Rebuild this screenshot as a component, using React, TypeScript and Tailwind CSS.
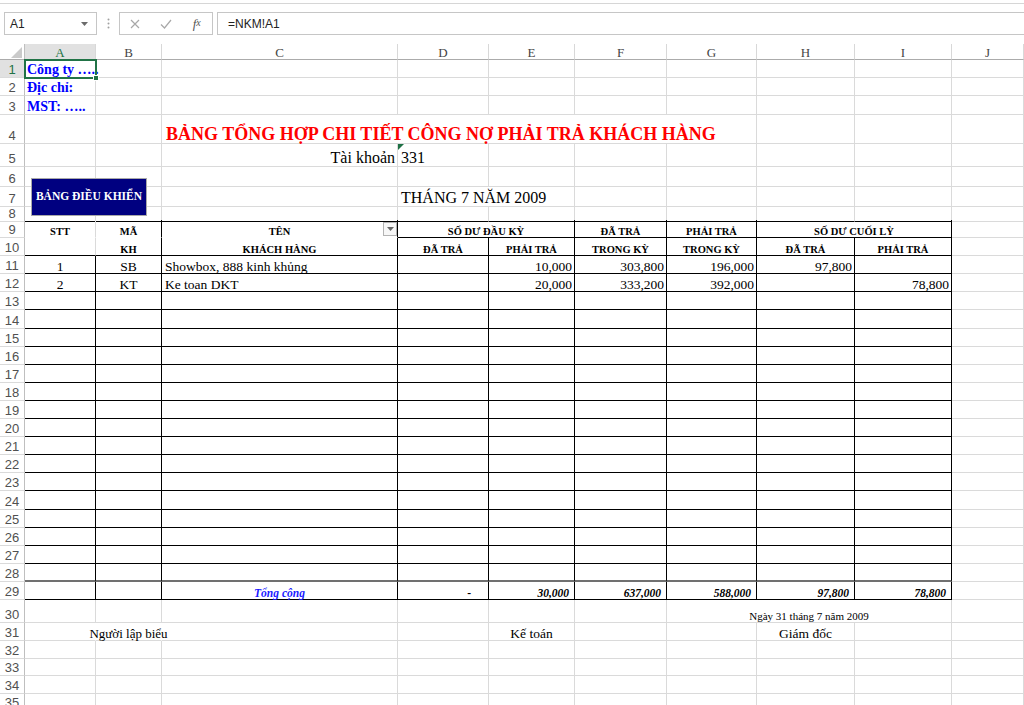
import React from 'react';

const COLS = 'grid grid-cols-[25px_71px_66px_236px_91px_86px_92px_90px_98px_97px_72px]';
const SERIF = "font-['Liberation_Serif','Times_New_Roman',serif]";
const SANS = "font-['Liberation_Sans',Arial,sans-serif]";

type Edge = 'g' | 'k' | 'n' | 't';

const RIGHT: Record<Edge, string> = {
  g: 'border-r-[#dadada]',
  k: 'border-r-black',
  n: 'border-r-transparent',
  t: 'border-r-black',
};

const BOTTOM: Record<Edge, string> = {
  g: 'border-b border-b-[#dadada]',
  k: 'border-b border-b-black',
  n: 'border-b border-b-transparent',
  t: 'border-b-2 border-b-[#707070]',
};

interface CellProps {
  r?: Edge;
  b?: Edge;
  className?: string;
  children?: React.ReactNode;
}

function Cell({ r = 'g', b = 'g', className = '', children }: CellProps) {
  return (
    <div className={`relative flex min-w-0 items-end whitespace-nowrap border-r ${RIGHT[r]} ${BOTTOM[b]} ${className}`}>
      {children}
    </div>
  );
}

const blank = (key: string, n: number, r: Edge = 'g', b: Edge = 'g') =>
  Array.from({ length: n }, (_, i) => <Cell key={key + i} r={r} b={b} />);

function RowHead({ n, active }: { n: number; active?: boolean }) {
  return (
    <div
      className={`flex items-end justify-center border-r border-r-[#bfbfbf] border-b border-b-[#dadada] text-[13px] leading-[14px] ${SANS} ${
        active ? 'bg-[#e1e1e1] text-[#217346]' : 'text-[#505050]'
      }`}
    >
      {n}
    </div>
  );
}

function Row({ n, h, active, children }: { n: number; h: string; active?: boolean; children: React.ReactNode }) {
  return (
    <div className={`${COLS} ${h}`}>
      <RowHead n={n} active={active} />
      {children}
    </div>
  );
}

function FormulaBar() {
  return (
    <div className={`h-[44px] ${SANS}`}>
      <div className="h-[4px] border-b border-[#d6d6d6]" />
      <div className="mt-[8px] flex h-[23px] pl-[4px]">
        <div className="flex w-[93px] items-center justify-between border border-[#c6c6c6] pl-[5px] pr-[8px] text-[12px] text-[#222]">
          <span>A1</span>
          <svg width="7" height="4" viewBox="0 0 7 4">
            <polygon points="0,0 7,0 3.5,4" fill="#6b6b6b" />
          </svg>
        </div>
        <div className="flex w-[22px] items-center justify-center">
          <svg width="3" height="11" viewBox="0 0 3 11">
            <circle cx="1.5" cy="1.5" r="1" fill="#a0a0a0" />
            <circle cx="1.5" cy="5.5" r="1" fill="#a0a0a0" />
            <circle cx="1.5" cy="9.5" r="1" fill="#a0a0a0" />
          </svg>
        </div>
        <div className="flex w-[94px] items-center border border-[#c6c6c6]">
          <span className="flex w-[31px] justify-center">
            <svg width="10" height="10" viewBox="0 0 10 10">
              <path d="M1 1 L9 9 M9 1 L1 9" stroke="#a8a8a8" strokeWidth="1.2" />
            </svg>
          </span>
          <span className="flex w-[31px] justify-center">
            <svg width="12" height="10" viewBox="0 0 12 10">
              <path d="M1 5.5 L4.5 9 L11 1" stroke="#a8a8a8" strokeWidth="1.2" fill="none" />
            </svg>
          </span>
          <span className={`flex w-[31px] justify-center text-[13px] italic text-[#555] ${SERIF}`}>
            f<span className="text-[10px] leading-[18px]">x</span>
          </span>
        </div>
        <div className="ml-[4px] flex flex-1 items-center border border-r-0 border-[#c6c6c6] pl-[10px] text-[12px] text-[#222]">
          =NKM!A1
        </div>
      </div>
    </div>
  );
}

function HeaderRow() {
  const letters = ['A', 'B', 'C', 'D', 'E', 'F', 'G', 'H', 'I', 'J'];
  return (
    <div className={`${COLS} h-[16px]`}>
      <div className="relative border-r border-r-[#bfbfbf] border-b border-b-[#ababab]">
        <svg className="absolute left-0 top-0" width="25" height="16" viewBox="0 0 25 16">
          <polygon points="22,3 22,14 11,14" fill="#cacaca" />
        </svg>
      </div>
      {letters.map((l) => (
        <div
          key={l}
          className={`flex items-end justify-center border-r border-r-[#d8d8d8] border-b border-b-[#ababab] text-[13px] leading-[12px] ${
            l === 'A' ? 'bg-[#e1e1e1] text-[#217346]' : 'text-[#444]'
          }`}
        >
          {l}
        </div>
      ))}
    </div>
  );
}

const TH = 'justify-center text-[10.5px] font-bold leading-[11px]';
const TXT = 'text-[13.5px] leading-[13px]';
const NUM = 'justify-end pr-[2px] text-[13.5px] leading-[13px]';
const TOT = 'justify-end pr-[5px] text-[11.5px] font-bold italic leading-[11px]';
const CO = 'pl-[2px] text-[14px] font-bold leading-[14px] text-[#0000ff]';

function Sheet() {
  const midRows = Array.from({ length: 16 }, (_, i) => i + 13);
  return (
    <div className="relative">
      <HeaderRow />

      <Row n={1} h="h-[18px]" active>
        <Cell className={CO}>Công ty …..</Cell>
        {blank('r1', 9)}
      </Row>
      <Row n={2} h="h-[18px]">
        <Cell className={CO}>Địc chỉ:</Cell>
        {blank('r2', 9)}
      </Row>
      <Row n={3} h="h-[18.5px]">
        <Cell className={CO}>MST: …..</Cell>
        {blank('r3', 9)}
      </Row>

      <Row n={4} h="h-[29.5px]">
        {blank('r4a', 2)}
        <Cell className="col-span-5 pl-[4px] text-[18px] font-bold leading-[17px] text-[#ff0000]">
          BẢNG TỔNG HỢP CHI TIẾT CÔNG NỢ PHẢI TRẢ KHÁCH HÀNG
        </Cell>
        {blank('r4b', 3)}
      </Row>

      <Row n={5} h="h-[23px]">
        {blank('r5a', 2)}
        <Cell className="justify-end pr-[2px] text-[16px] leading-[16px]">Tài khoản</Cell>
        <Cell className="pl-[3px] text-[16px] leading-[16px]">
          <svg className="absolute left-0 top-0" width="6" height="6" viewBox="0 0 6 6">
            <polygon points="0,0 6,0 0,6" fill="#1e7145" />
          </svg>
          331
        </Cell>
        {blank('r5b', 6)}
      </Row>

      <Row n={6} h="h-[20px]">{blank('r6', 10)}</Row>

      <Row n={7} h="h-[20px]">
        {blank('r7a', 3)}
        <Cell className="col-span-2 pl-[3px] text-[16px] leading-[16px]">THÁNG 7 NĂM 2009</Cell>
        {blank('r7b', 5)}
      </Row>

      <Row n={8} h="h-[13px]">
        {blank('r8', 9, 'g', 'k')}
        <Cell />
      </Row>

      <Row n={9} h="h-[18.1px]">
        <Cell r="g" b="n" className={TH}>STT</Cell>
        <Cell r="k" b="n" className={TH}>MÃ</Cell>
        <Cell r="k" b="n" className={TH}>
          TÊN
          <div className="absolute right-0 top-[2px] flex h-[14px] w-[14px] items-center justify-center border border-[#b3b3b3] bg-[#f7f7f7]">
            <svg width="7" height="4" viewBox="0 0 7 4">
              <polygon points="0,0 7,0 3.5,4" fill="#666" />
            </svg>
          </div>
        </Cell>
        <Cell r="k" b="k" className={`col-span-2 ${TH}`}>SỐ DƯ ĐẦU KỲ</Cell>
        <Cell r="k" b="k" className={TH}>ĐÃ TRẢ</Cell>
        <Cell r="k" b="k" className={TH}>PHẢI TRẢ</Cell>
        <Cell r="k" b="k" className={`col-span-2 ${TH}`}>SỐ DƯ CUỐI LỲ</Cell>
        <Cell />
      </Row>

      <Row n={10} h="h-[18.1px]">
        <Cell r="g" b="k" />
        <Cell r="k" b="k" className={TH}>KH</Cell>
        <Cell r="k" b="k" className={TH}>KHÁCH HÀNG</Cell>
        <Cell r="k" b="k" className={TH}>ĐÃ TRẢ</Cell>
        <Cell r="k" b="k" className={TH}>PHẢI TRẢ</Cell>
        <Cell r="k" b="k" className={TH}>TRONG KỲ</Cell>
        <Cell r="k" b="k" className={TH}>TRONG KỲ</Cell>
        <Cell r="k" b="k" className={TH}>ĐÃ TRẢ</Cell>
        <Cell r="k" b="k" className={TH}>PHẢI TRẢ</Cell>
        <Cell />
      </Row>

      <Row n={11} h="h-[18.1px]">
        <Cell r="k" b="k" className={`justify-center ${TXT}`}>1</Cell>
        <Cell r="k" b="k" className={`justify-center ${TXT}`}>SB</Cell>
        <Cell r="k" b="k" className={`pl-[3px] ${TXT}`}>Showbox, 888 kinh khủng</Cell>
        <Cell r="k" b="k" />
        <Cell r="k" b="k" className={NUM}>10,000</Cell>
        <Cell r="k" b="k" className={NUM}>303,800</Cell>
        <Cell r="k" b="k" className={NUM}>196,000</Cell>
        <Cell r="k" b="k" className={NUM}>97,800</Cell>
        <Cell r="k" b="k" />
        <Cell />
      </Row>

      <Row n={12} h="h-[18.1px]">
        <Cell r="k" b="k" className={`justify-center ${TXT}`}>2</Cell>
        <Cell r="k" b="k" className={`justify-center ${TXT}`}>KT</Cell>
        <Cell r="k" b="k" className={`pl-[3px] ${TXT}`}>Ke toan DKT</Cell>
        <Cell r="k" b="k" />
        <Cell r="k" b="k" className={NUM}>20,000</Cell>
        <Cell r="k" b="k" className={NUM}>333,200</Cell>
        <Cell r="k" b="k" className={NUM}>392,000</Cell>
        <Cell r="k" b="k" />
        <Cell r="k" b="k" className={NUM}>78,800</Cell>
        <Cell />
      </Row>

      {midRows.map((n) => (
        <Row key={n} n={n} h="h-[18.1px]">
          {blank(`m${n}`, 9, 'k', n === 28 ? 't' : 'k')}
          <Cell />
        </Row>
      ))}

      <Row n={29} h="h-[18px]">
        <Cell r="k" b="k" />
        <Cell r="k" b="k" />
        <Cell r="k" b="k" className="justify-center text-[11.5px] font-bold italic leading-[11px] text-[#1a1aff]">
          Tổng cộng
        </Cell>
        <Cell r="k" b="k" className="justify-end pr-[17px] text-[11.5px] font-bold leading-[11px]">-</Cell>
        <Cell r="k" b="k" className={TOT}>30,000</Cell>
        <Cell r="k" b="k" className={TOT}>637,000</Cell>
        <Cell r="k" b="k" className={TOT}>588,000</Cell>
        <Cell r="k" b="k" className={TOT}>97,800</Cell>
        <Cell r="k" b="k" className={TOT}>78,800</Cell>
        <Cell />
      </Row>

      <Row n={30} h="h-[23px]">
        {blank('r30a', 6)}
        <Cell className="col-span-3 justify-center text-[11px] leading-[12px]">Ngày 31 tháng 7 năm 2009</Cell>
        <Cell />
      </Row>

      <Row n={31} h="h-[18.5px]">
        <Cell r="n" />
        <Cell r="n" className="justify-center text-[13px] leading-[13px]">Người lập biểu</Cell>
        {blank('r31a', 2)}
        <Cell className={`justify-center ${TXT}`}>Kế toán</Cell>
        {blank('r31b', 2)}
        <Cell className={`justify-center ${TXT}`}>Giám đốc</Cell>
        {blank('r31c', 2)}
      </Row>

      {[32, 33, 34, 35].map((n) => (
        <Row key={n} n={n} h="h-[17.5px]">
          {blank(`e${n}`, 10)}
        </Row>
      ))}

      {/* active cell A1 */}
      <div className="pointer-events-none absolute left-[24px] top-[15px] h-[20px] w-[73px] border-2 border-[#217346]" />
      <div className="pointer-events-none absolute left-[93px] top-[31px] h-[6px] w-[6px] border border-white bg-[#217346]" />

      {/* macro button */}
      <div className="absolute left-[31px] top-[134px] flex h-[38px] w-[116px] items-center justify-center border border-[#a9a9a9] bg-[#000080] text-[11.5px] font-bold text-white">
        BẢNG ĐIỀU KHIỂN
      </div>
    </div>
  );
}

export default function App() {
  return (
    <div className={`h-[705px] w-[1024px] overflow-hidden bg-white text-black ${SERIF}`}>
      <FormulaBar />
      <Sheet />
    </div>
  );
}
